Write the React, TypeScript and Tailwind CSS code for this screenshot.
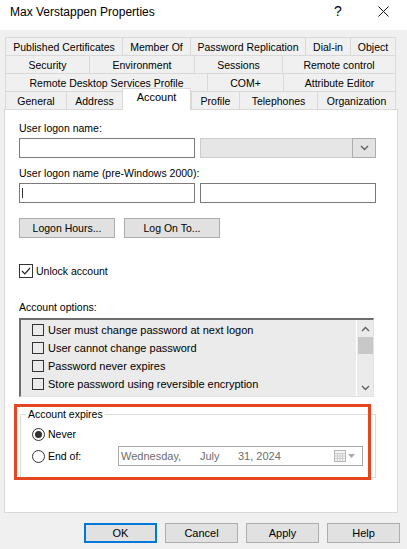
import React from "react";

type Tab = { label: string; w: number; active?: boolean };

const rows: Tab[][] = [
  [
    { label: "Published Certificates", w: 117 },
    { label: "Member Of", w: 68 },
    { label: "Password Replication", w: 115 },
    { label: "Dial-in", w: 45 },
    { label: "Object", w: 46 },
  ],
  [
    { label: "Security", w: 84 },
    { label: "Environment", w: 105 },
    { label: "Sessions", w: 88 },
    { label: "Remote control", w: 114 },
  ],
  [
    { label: "Remote Desktop Services Profile", w: 202 },
    { label: "COM+", w: 76 },
    { label: "Attribute Editor", w: 113 },
  ],
  [
    { label: "General", w: 61 },
    { label: "Address", w: 56 },
    { label: "Account", w: 69, active: true },
    { label: "Profile", w: 48 },
    { label: "Telephones", w: 78 },
    { label: "Organization", w: 79 },
  ],
];

const options = [
  "User must change password at next logon",
  "User cannot change password",
  "Password never expires",
  "Store password using reversible encryption",
];

function TabRow({ tabs }: { tabs: Tab[] }) {
  return (
    <div className="flex h-[18px] items-end">
      {tabs.map((t, i) =>
        t.active ? (
          <div
            key={t.label}
            style={{ width: t.w }}
            className="relative top-px z-10 h-[22px] shrink-0 bg-white border-l border-t border-r border-[#d9d9d9] flex items-start justify-center pt-[1px] text-[11px]"
          >
            {t.label}
          </div>
        ) : (
          <div
            key={t.label}
            style={{ width: t.w }}
            className={`h-[18px] shrink-0 border-t border-l border-[#d9d9d9] flex items-center justify-center ${
              i === tabs.length - 1 ? "border-r" : ""
            }`}
          >
            {t.label}
          </div>
        )
      )}
    </div>
  );
}

function Chevron({ up }: { up?: boolean }) {
  return (
    <svg width="9" height="6" viewBox="0 0 9 6">
      <path
        d={up ? "M1 5 L4.5 1.5 L8 5" : "M1 1 L4.5 4.5 L8 1"}
        fill="none"
        stroke="#606060"
        strokeWidth="1.4"
      />
    </svg>
  );
}

function WinButton({ label, w, focus }: { label: string; w: string; focus?: boolean }) {
  return (
    <div
      className={`${w} h-[20px] flex items-center justify-center bg-[#e1e1e1] ${
        focus ? "border-2 border-[#0078d7]" : "border border-[#adadad]"
      }`}
    >
      {label}
    </div>
  );
}

export default function App() {
  return (
    <div className="w-[407px] h-[549px] overflow-hidden bg-[#f0f0f0] text-[10.5px] leading-[14px] text-black font-['Liberation_Sans',Arial,sans-serif]">
      {/* title bar */}
      <div className="h-[30px] bg-white flex items-start pt-[5px]">
        <span className="pl-[10px] text-[12px] flex-1">Max Verstappen Properties</span>
        <span className="text-[14px] w-[12px] mr-[32px] -mt-[1px]">?</span>
        <svg width="11" height="11" viewBox="0 0 11 11" className="mr-[18px] mt-[1px]">
          <path d="M0.5 0.5 L10.5 10.5 M10.5 0.5 L0.5 10.5" stroke="#111" strokeWidth="1" />
        </svg>
      </div>

      {/* tabs */}
      <div className="ml-[5px] w-[391px] mt-[7px]">
        {rows.map((r, i) => (
          <TabRow key={i} tabs={r} />
        ))}
      </div>

      {/* panel */}
      <div className="relative ml-[4px] w-[394px] h-[404px] bg-white border border-[#d9d9d9] pl-[14px] pt-[11px] flex flex-col">
        <div>User logon name:</div>
        <div className="flex gap-[5px] mt-[3px]">
          <div className="w-[176px] h-[20px] border border-[#7a7a7a] bg-white" />
          <div className="w-[176px] h-[20px] border border-[#cccccc] bg-[#e6e6e6] flex justify-end">
            <div className="w-[24px] h-[20px] -mt-px -mr-px border border-[#adadad] bg-[#e3e3e3] flex items-center justify-center">
              <Chevron />
            </div>
          </div>
        </div>

        <div className="mt-[8px]">User logon name (pre-Windows 2000):</div>
        <div className="flex gap-[5px] mt-[3px]">
          <div className="w-[176px] h-[20px] border border-[#7a7a7a] bg-white flex items-center pl-[2px]">
            <div className="w-px h-[10px] bg-[#333]" />
          </div>
          <div className="w-[176px] h-[20px] border border-[#7a7a7a] bg-white" />
        </div>

        <div className="flex gap-[9px] mt-[15px]">
          <WinButton label="Logon Hours..." w="w-[96px]" />
          <WinButton label="Log On To..." w="w-[96px]" />
        </div>

        <div className="flex items-center gap-[3px] mt-[26px]">
          <div className="w-[14px] h-[14px] border border-[#333] bg-white flex items-center justify-center">
            <svg width="10" height="8" viewBox="0 0 10 8">
              <path d="M1 4 L3.8 6.8 L9 1" fill="none" stroke="#222" strokeWidth="1.2" />
            </svg>
          </div>
          <span>Unlock account</span>
        </div>

        <div className="mt-[22px]">Account options:</div>
        <div className="mt-[4px] w-[355px] h-[79px] flex bg-[#ebebeb] border-t-2 border-l-2 border-r border-b border-t-[#6d6d6d] border-l-[#6d6d6d] border-r-[#e3e3e3] border-b-[#e3e3e3]">
          <div className="flex-1 pt-[1px] pl-[11px]">
            {options.map((o) => (
              <div key={o} className="h-[18px] flex items-center gap-[4px] text-[11px]">
                <div className="w-[12px] h-[12px] border border-[#333]" />
                <span>{o}</span>
              </div>
            ))}
          </div>
          <div className="w-[17px] border-l border-white flex flex-col items-center">
            <div className="h-[17px] flex items-center justify-center">
              <Chevron up />
            </div>
            <div className="w-[15px] h-[17px] bg-[#c8c8c8]" />
            <div className="flex-1" />
            <div className="h-[17px] flex items-center justify-center">
              <Chevron />
            </div>
          </div>
        </div>

        <fieldset className="mt-[10px] ml-px w-[356px] h-[71px] border border-[#dcdcdc]">
          <legend className="ml-[5px] px-[2px]">Account expires</legend>
          <div className="pl-[11px]">
            <div className="h-[16px] mt-[5px] flex items-center gap-[3px]">
              <div className="w-[13px] h-[13px] rounded-full border border-[#333] flex items-center justify-center">
                <div className="w-[7px] h-[7px] rounded-full bg-[#333]" />
              </div>
              <span>Never</span>
            </div>
            <div className="h-[20px] mt-[4px] flex items-center gap-[3px]">
              <div className="w-[13px] h-[13px] rounded-full border border-[#333]" />
              <span className="w-[67px]">End of:</span>
              <div className="w-[245px] h-[20px] border border-[#a8a8a8] bg-white flex items-center pl-[2px] pr-[6px] text-[#6d6d6d] text-[11px]">
                <span className="w-[79px]">Wednesday,</span>
                <span className="w-[38px]">July</span>
                <span className="flex-1">31, 2024</span>
                <svg width="22" height="12" viewBox="0 0 22 12">
                  <rect x="0.5" y="0.5" width="11" height="11" fill="#f4f4f4" stroke="#b4b4b4" />
                  <path
                    d="M0.5 3.5 H11.5 M0.5 6 H11.5 M0.5 8.5 H11.5 M3.5 3.5 V11.5 M6 3.5 V11.5 M8.5 3.5 V11.5"
                    stroke="#c4c4c4"
                    strokeWidth="0.8"
                  />
                  <path d="M14 4 L21 4 L17.5 8 Z" fill="#a8a8a8" />
                </svg>
              </div>
            </div>
          </div>
        </fieldset>

        {/* highlight annotation */}
        <div className="absolute left-[9px] top-[294px] w-[357px] h-[76px] border-[3px] border-[#e4461f]" />
      </div>

      {/* dialog buttons */}
      <div className="mt-[10px] flex justify-end gap-[8px] pr-[7px] text-[11px]">
        <WinButton label="OK" w="w-[73px]" focus />
        <WinButton label="Cancel" w="w-[73px]" />
        <WinButton label="Apply" w="w-[73px]" />
        <WinButton label="Help" w="w-[73px]" />
      </div>
    </div>
  );
}
